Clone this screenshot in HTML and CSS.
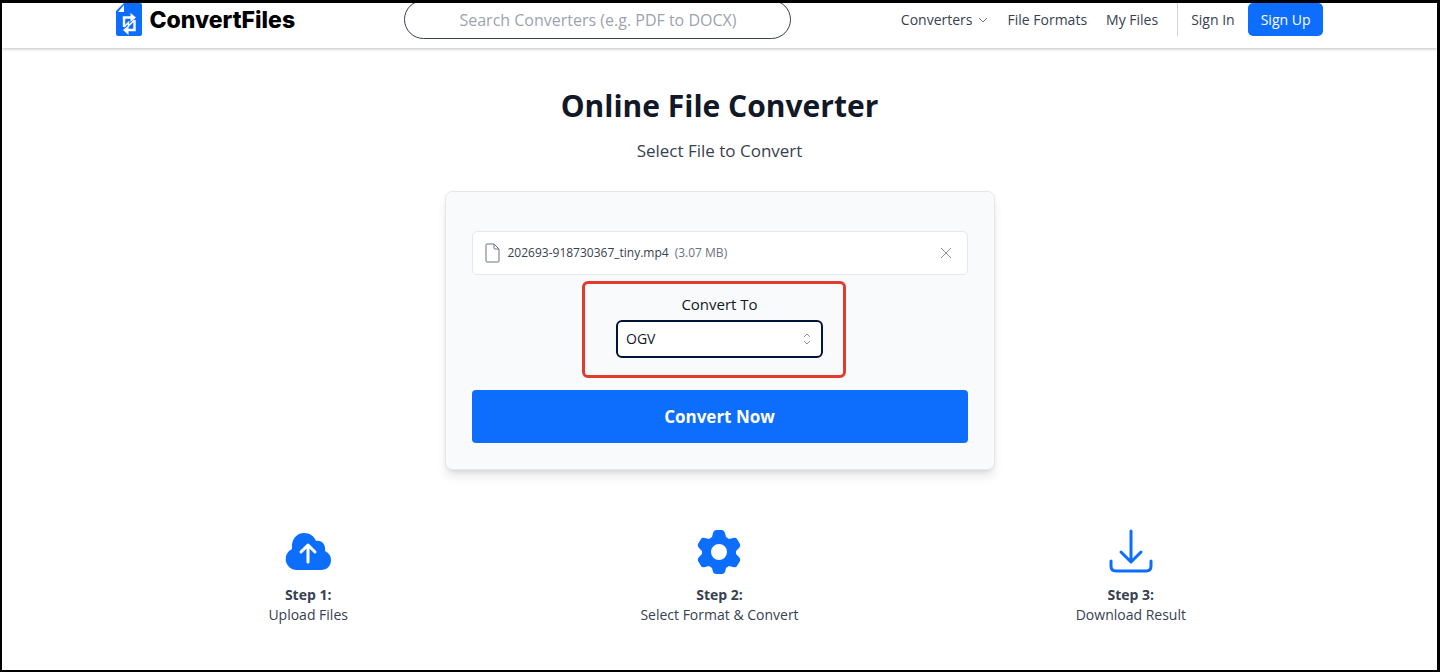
FILE: index.html
```html
<!DOCTYPE html>
<html lang="en">
<head>
    <meta charset="UTF-8">
    <meta name="viewport" content="width=device-width, initial-scale=1.0">
    <title>Online File Converter - ConvertFiles</title>
    <link rel="stylesheet" href="styles.css">
</head>
<body>
    <header class="header">
        <div class="container header-inner">
            <a class="logo" href="#">
                <svg class="logo-icon" viewBox="0 0 26 33" aria-hidden="true">
                    <path fill="#0d6efd" d="M8 0h16a2 2 0 0 1 2 2v29a2 2 0 0 1-2 2H2a2 2 0 0 1-2-2V8z"/>
                    <path fill="#fff" d="M8 2v7H2z"/>
                    <path fill="none" stroke="#fff" stroke-width="2.4" d="M8 24V14.500h7M18.500 17v10H12"/>
                    <path fill="#fff" d="M14.500 10l5.500 4.500-5.500 4.500zM12.500 22.500L7 27l5.500 5z"/>
                    <path fill="none" stroke="#fff" stroke-width="1.500" d="M8 24l4.500-4.500v3.500l6-6"/>
                </svg>
                <span>ConvertFiles</span>
            </a>
            <input class="search" type="text" aria-label="Search Converters" placeholder="Search Converters (e.g. PDF to DOCX)">
            <nav class="nav">
                <a class="nav-link" href="#">Converters
                    <svg class="chevron" viewBox="0 0 10 10" aria-hidden="true"><path d="M1 3l4 4 4-4"/></svg>
                </a>
                <a class="nav-link" href="#">File Formats</a>
                <a class="nav-link" href="#">My Files</a>
                <div class="account">
                    <a class="nav-link" href="#">Sign In</a>
                    <a class="sign-up" href="#">Sign Up</a>
                </div>
            </nav>
        </div>
    </header>

    <main class="container">
        <h1>Online File Converter</h1>
        <p class="subtitle">Select File to Convert</p>

        <form class="card">
            <div class="file">
                <svg class="file-icon" viewBox="0 0 16 20" aria-hidden="true"><path d="M2 1h7l5 5v12a1 1 0 0 1-1 1H2a1 1 0 0 1-1-1V2a1 1 0 0 1 1-1zM9 1v4q0 1 1 1h4"/></svg>
                <span class="file-name">202693-918730367_tiny.mp4</span>
                <span class="file-size">(3.07 MB)</span>
                <button class="remove" type="button" aria-label="Remove file">
                    <svg viewBox="0 0 12 12" aria-hidden="true"><path d="M1 1l10 10M11 1L1 11"/></svg>
                </button>
            </div>
            <div class="format">
                <label for="format">Convert To</label>
                <div class="select-wrap">
                    <select id="format" name="format">
                        <option>OGV</option>
                        <option>MP4</option>
                        <option>AVI</option>
                    </select>
                    <svg class="select-icon" viewBox="0 0 10 14" aria-hidden="true"><path d="M2 5l3-3 3 3M2 9l3 3 3-3"/></svg>
                </div>
                <div class="highlight"></div>
            </div>
            <button class="convert" type="submit">Convert Now</button>
        </form>

        <section class="steps">
            <div class="step">
                <svg viewBox="0 0 48 48" aria-hidden="true">
                    <path fill="#0d6efd" d="M12 43A11 11 0 0 1 8 22C7 12 13 6 20 6c6 0 10 3 12 8 6-1 10 4 9 10 4 2 6 5 6 9 0 6-4 10-10 10z"/>
                    <path fill="none" stroke="#fff" stroke-width="3" stroke-linecap="round" stroke-linejoin="round" d="M24 35V19M17 25l7-7 7 7"/>
                </svg>
                <strong>Step 1:</strong>
                <span>Upload Files</span>
            </div>
            <div class="step">
                <svg viewBox="0 0 48 48" aria-hidden="true">
                    <path fill="#0d6efd" fill-rule="evenodd" d="M21 3h6q2 0 3 3l1 4 3 2 4-1q3-1 4 1l3 5q1 2-1 4l-3 3v3l3 3q2 2 1 4l-3 5q-1 2-4 1l-4-1-3 2-1 4q-1 2-3 2h-6q-2 0-3-2l-1-4-3-2-4 1q-3 1-4-1l-3-5q-1-2 1-4l3-3v-3l-3-3q-2-2-1-4l3-5q1-2 4-1l4 1 3-2 1-4q1-3 3-3zM24 17a8 8 0 1 0 0 16 8 8 0 1 0 0-16z"/>
                </svg>
                <strong>Step 2:</strong>
                <span>Select Format &amp; Convert</span>
            </div>
            <div class="step">
                <svg viewBox="0 0 48 48" aria-hidden="true">
                    <path fill="none" stroke="#0d6efd" stroke-width="3" stroke-linecap="round" stroke-linejoin="round" d="M24 4v31M14 25l10 10 10-10M4 34v5q0 5 5 5h30q5 0 5-5v-5"/>
                </svg>
                <strong>Step 3:</strong>
                <span>Download Result</span>
            </div>
        </section>
    </main>
</body>
</html>
```

FILE: styles.css
```css
* {
    box-sizing: border-box;
}

body {
    margin: 0;
    min-height: 100vh;
    border: solid #000;
    border-width: 3px 3px 2px 2px;
    font-family: "Open Sans", "Noto Sans", sans-serif;
    font-size: 14px;
    line-height: 20px;
    color: #374151;
    background: #fff;
}

a {
    color: inherit;
    text-decoration: none;
}

.container {
    width: 85%;
    max-width: 1208px;
    margin: 0 auto;
}

/* header */
.header {
    height: 45px;
    overflow: hidden;
    box-shadow: 0 1px 3px rgba(0, 0, 0, 0.25);
}

.header-inner {
    display: flex;
    justify-content: space-between;
    align-items: center;
    height: 33px;
}

.logo {
    display: flex;
    align-items: center;
    gap: 8px;
    color: #000;
    font-family: Inter, sans-serif;
    font-size: 23px;
    font-weight: 800;
}

.logo-icon {
    width: 26px;
    height: 33px;
}

.search {
    width: 387px;
    height: 39px;
    flex-shrink: 0;
    border: 1px solid #374151;
    border-radius: 20px;
    background: #fff;
    font: inherit;
    font-size: 16px;
    text-align: center;
}

.search::placeholder {
    color: #9ca3af;
}

.nav,
.account {
    display: flex;
    align-items: center;
}

.nav {
    gap: 19px;
}

.nav-link {
    display: flex;
    align-items: center;
    gap: 6px;
    white-space: nowrap;
}

.chevron {
    width: 10px;
    height: 10px;
    fill: none;
    stroke: #6b7280;
}

.account {
    gap: 13px;
    height: 33px;
    padding-left: 13px;
    border-left: 1px solid #d1d5db;
}

.sign-up {
    padding: 7px 13px 6px;
    border-radius: 5px;
    background: #0d6efd;
    color: #fff;
    white-space: nowrap;
}

/* converter */
h1 {
    margin: 38px 0 0;
    color: #111827;
    font-size: 30px;
    font-weight: 700;
    line-height: 40px;
    text-align: center;
}

.subtitle {
    margin: 13px 0 28px;
    font-size: 17px;
    line-height: 24px;
    text-align: center;
}

.card {
    max-width: 550px;
    margin: 0 auto;
    padding: 39px 26px 26px;
    border: 1px solid #e5e7eb;
    border-radius: 7px;
    background: #f9fafb;
    box-shadow: 0 8px 12px -2px rgba(0, 0, 0, 0.1), 0 3px 5px -2px rgba(0, 0, 0, 0.1);
}

.file {
    display: flex;
    align-items: center;
    height: 44px;
    padding: 0 12px;
    border: 1px solid #e5e7eb;
    border-radius: 5px;
    background: #fff;
    font-size: 12px;
}

.file-icon {
    width: 16px;
    height: 20px;
    margin-right: 7px;
    fill: none;
    stroke: #6b7280;
}

.file-size {
    margin-left: 6px;
    color: #6b7280;
}

.remove {
    width: 18px;
    height: 20px;
    margin-left: auto;
    padding: 0;
    border: 0;
    background: none;
    cursor: pointer;
}

.remove svg {
    display: block;
    width: 12px;
    height: 12px;
    margin: 0 auto;
    fill: none;
    stroke: #8b929e;
}

.format {
    position: relative;
    display: flex;
    flex-direction: column;
    align-items: center;
    gap: 6px;
    padding: 19px 0 32px;
}

.format label {
    color: #111827;
    font-size: 15px;
}

.select-wrap {
    position: relative;
    width: 207px;
}

select {
    display: block;
    width: 100%;
    height: 38px;
    padding: 0 8px;
    appearance: none;
    border: 2px solid #03123a;
    border-radius: 6px;
    background: #fff;
    color: #111827;
    font: inherit;
}

.select-icon {
    position: absolute;
    top: 12px;
    right: 11px;
    width: 10px;
    height: 14px;
    fill: none;
    stroke: #8b929e;
    pointer-events: none;
}

.highlight {
    position: absolute;
    top: 6px;
    right: 122px;
    bottom: 12px;
    left: 110px;
    border: 3px solid #e23b2e;
    border-radius: 6px;
    pointer-events: none;
}

.convert {
    display: block;
    width: 100%;
    height: 53px;
    border: 0;
    border-radius: 4px;
    background: #0d6efd;
    color: #fff;
    font: inherit;
    font-size: 17px;
    font-weight: 700;
    cursor: pointer;
}

/* steps */
.steps {
    display: grid;
    grid-template-columns: repeat(3, 1fr);
    gap: 26px;
    padding: 57px 0 24px;
}

.step {
    display: flex;
    flex-direction: column;
    align-items: center;
}

.step svg {
    width: 48px;
    height: 48px;
    margin-bottom: 10px;
}
```
